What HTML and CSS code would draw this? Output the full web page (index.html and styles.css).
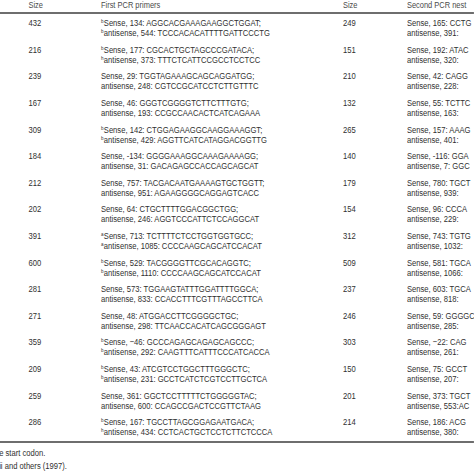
FILE: index.html
```html
<!DOCTYPE html>
<html>
<head>
<meta charset="utf-8">
<link rel="stylesheet" href="styles.css">
</head>
<body>
<div class="frame">
<div class="page">
  <div class="thead row-grid">
    <div>Size</div>
    <div>First PCR primers</div>
    <div>Size</div>
    <div class="clip">Second PCR nest</div>
  </div>
  <div class="tbody">
    <div class="row row-grid"><div>432</div><div><sup>b</sup>Sense, 134: AGGCACGAAAGAAGGCTGGAT;<br><sup>b</sup>antisense, 544: TCCCACACATTTTGATTCCCTG</div><div>249</div><div class="clip">Sense, 165: CCTG<br>antisense, 391:</div></div>
    <div class="row row-grid"><div>216</div><div><sup>b</sup>Sense, 177: CGCACTGCTAGCCCGATACA;<br><sup>h</sup>antisense, 373: TTTCTCATTCCGCCTCCTCC</div><div>151</div><div class="clip">Sense, 192: ATAC<br>antisense, 320:</div></div>
    <div class="row row-grid"><div>239</div><div>Sense, 29: TGGTAGAAAGCAGCAGGATGG;<br>antisense, 248: CGTCCGCATCCTCTTGTTTC</div><div>210</div><div class="clip">Sense, 42: CAGG<br>antisense, 228:</div></div>
    <div class="row row-grid"><div>167</div><div>Sense, 46: GGGTCGGGGTCTTCTTTGTG;<br>antisense, 193: CCGCCAACACTCATCAGAAA</div><div>132</div><div class="clip">Sense, 55: TCTTC<br>antisense, 163:</div></div>
    <div class="row row-grid"><div>309</div><div><sup>b</sup>Sense, 142: CTGGAGAAGGCAAGGAAAGGT;<br><sup>b</sup>antisense, 429: AGGTTCATCATAGGACGGTTG</div><div>265</div><div class="clip">Sense, 157: AAAG<br>antisense, 401:</div></div>
    <div class="row row-grid"><div>184</div><div>Sense, -134: GGGGAAAGGCAAAGAAAAGG;<br>antisense, 31: GACAGAGCCACCAGCAGCAT</div><div>140</div><div class="clip">Sense, -116: GGA<br>antisense, 7: GGC</div></div>
    <div class="row row-grid"><div>212</div><div>Sense, 757: TACGACAATGAAAAGTGCTGGTT;<br>antisense, 951: AGAAGGGGCAGGAGTCACC</div><div>179</div><div class="clip">Sense, 780: TGCT<br>antisense, 939:</div></div>
    <div class="row row-grid"><div>202</div><div>Sense, 64: CTGCTTTTGGACGGCTGG;<br>antisense, 246: AGGTCCCATTCTCCAGGCAT</div><div>154</div><div class="clip">Sense, 96: CCCA<br>antisense, 229:</div></div>
    <div class="row row-grid"><div>391</div><div><sup>a</sup>Sense, 713: TCTTTTCTCCTGGTGGTGCC;<br><sup>a</sup>antisense, 1085: CCCCAAGCAGCATCCACAT</div><div>312</div><div class="clip">Sense, 743: TGTG<br>antisense, 1032:</div></div>
    <div class="row row-grid"><div>600</div><div><sup>b</sup>Sense, 529: TACGGGGTTCGCACAGGTC;<br><sup>b</sup>antisense, 1110: CCCCAAGCAGCATCCACAT</div><div>509</div><div class="clip">Sense, 581: TGCA<br>antisense, 1066:</div></div>
    <div class="row row-grid"><div>281</div><div>Sense, 573: TGGAAGTATTTGGATTTTGGCA;<br>antisense, 833: CCACCTTTCGTTTAGCCTTCA</div><div>237</div><div class="clip">Sense, 603: TGCA<br>antisense, 818:</div></div>
    <div class="row row-grid"><div>271</div><div>Sense, 48: ATGGACCTTCGGGGCTGC;<br>antisense, 298: TTCAACCACATCAGCGGGAGT</div><div>246</div><div class="clip">Sense, 59: GGGGC<br>antisense, 285:</div></div>
    <div class="row row-grid"><div>359</div><div><sup>b</sup>Sense, −46: GCCCAGAGCAGAGCAGCCC;<br><sup>b</sup>antisense, 292: CAAGTTTCATTTCCCATCACCA</div><div>303</div><div class="clip">Sense, −22: CAG<br>antisense, 261:</div></div>
    <div class="row row-grid"><div>209</div><div><sup>b</sup>Sense, 43: ATCGTCCTGGCTTTGGGCTC;<br><sup>b</sup>antisense, 231: GCCTCATCTCGTCCTTGCTCA</div><div>150</div><div class="clip">Sense, 75: GCCT<br>antisense, 207:</div></div>
    <div class="row row-grid"><div>259</div><div>Sense, 361: GGCTCCTTTTTCTGGGGGTAC;<br>antisense, 600: CCAGCCGACTCCGTTCTAAG</div><div>201</div><div class="clip">Sense, 373: TGCT<br>antisense, 553:AC</div></div>
    <div class="row row-grid"><div>286</div><div><sup>b</sup>Sense, 167: TGCCTTAGCGGAGAATGACA;<br><sup>h</sup>antisense, 434: CCTCACTGCTCCTCTTCTCCCA</div><div>214</div><div class="clip">Sense, 186: ACG<br>antisense, 380:</div></div>
  </div>
  <div class="notes">
    <p>e start codon.</p>
    <p>ii and others (1997).</p>
  </div>
</div>
</div>
</body>
</html>
```
FILE: styles.css
```css
html, body {
  margin: 0;
  padding: 0;
  background: #ffffff;
}
.frame {
  width: 474px;
  height: 474px;
  overflow: hidden;
}
/* The source typeface is a condensed grotesque; Liberation Sans is
   condensed horizontally to match its set width. */
.page {
  font-family: "Liberation Sans", Arial, sans-serif;
  font-size: 9.2px;
  color: #303030;
  width: 571px;
  transform: scaleX(0.83);
  transform-origin: 0 0;
}
.row-grid {
  display: grid;
  grid-template-columns: 87.3px 291.6px 77.1px 1fr;
  padding-left: 34.3px;
  white-space: nowrap;
}
.clip {
  overflow: hidden;
  min-width: 0;
}
.thead {
  height: 12px;
  line-height: 10px;
  font-size: 9px;
  border-bottom: 2px solid #6e6e6e;
  color: #4a4a4a;
}
.tbody {
  padding-top: 1px;
  border-bottom: 2px solid #6e6e6e;
}
.row {
  padding-top: 3.3px;
  padding-bottom: 3.3px;
  line-height: 10px;
}
sup {
  font-size: 5.5px;
  line-height: 0;
  vertical-align: 3px;
  margin-right: 0.4px;
}
.notes {
  padding-top: 4px;
  line-height: 13px;
  margin-left: -1px;
}
.notes p {
  margin: 0;
}
```
